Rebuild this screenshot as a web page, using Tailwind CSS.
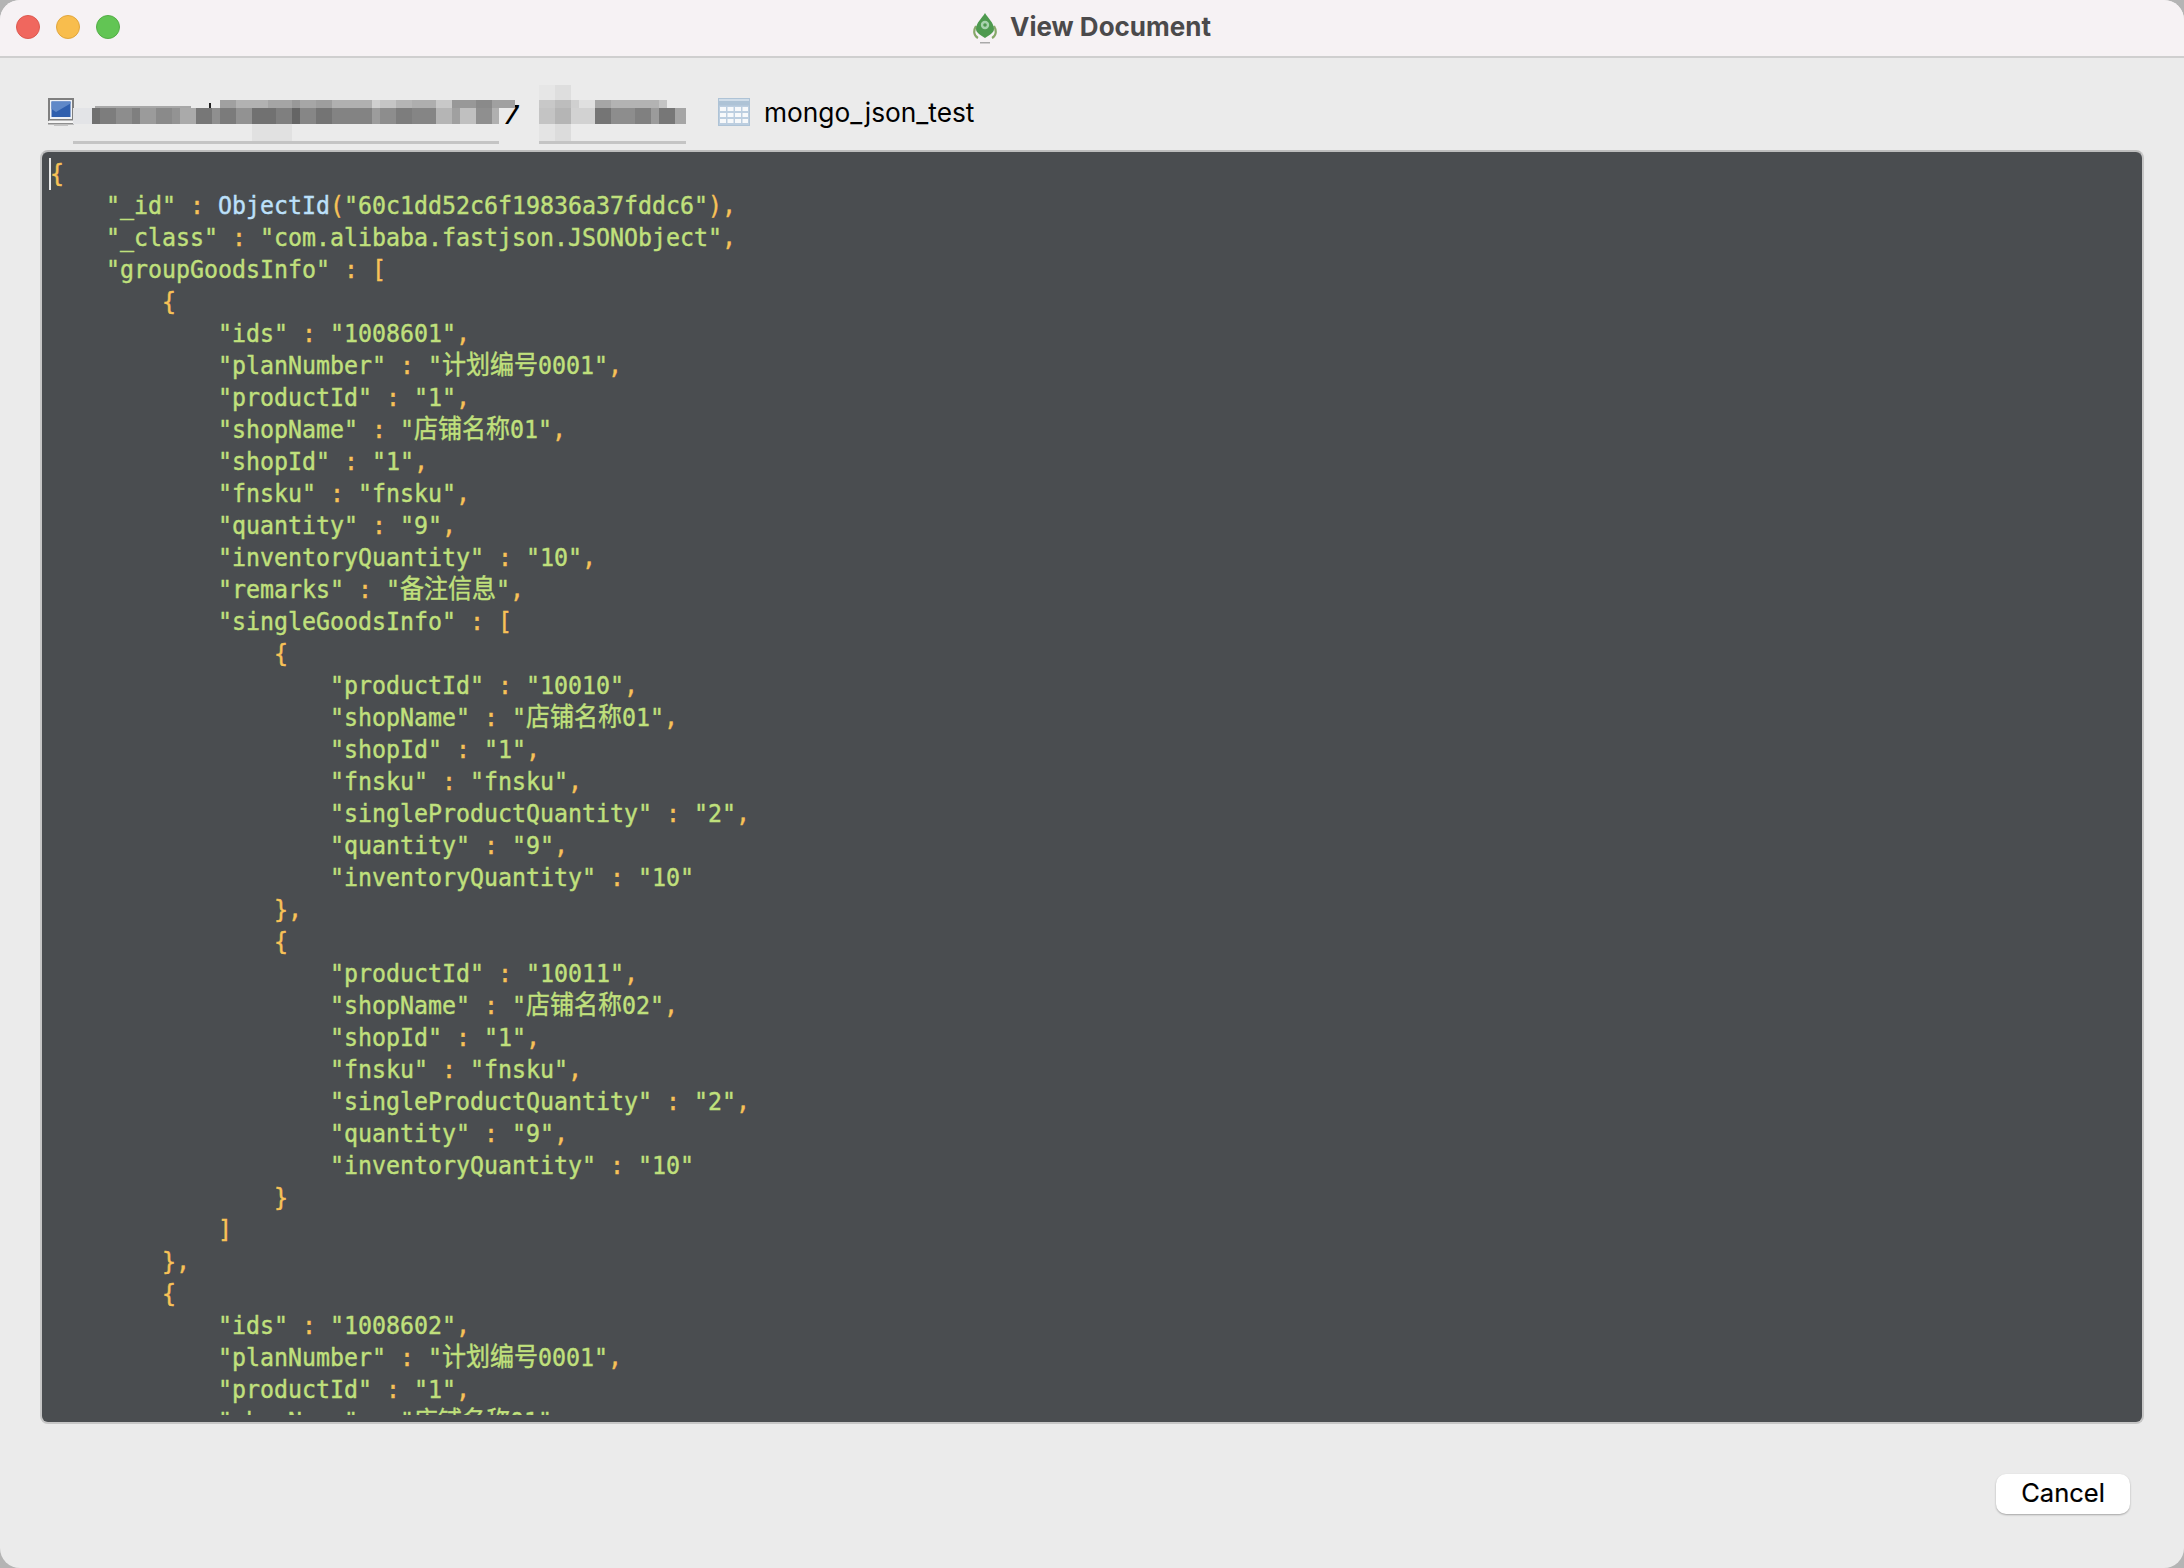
<!DOCTYPE html>
<html lang="en">
<head>
<meta charset="utf-8">
<title>View Document</title>
<script src="https://cdn.jsdelivr.net/npm/@tailwindcss/browser@4"></script>
</head>
<body class="bg-[#b4b4b4]">
<div class="w-[2184px] h-[1568px] overflow-hidden rounded-[20px] bg-[#ebebeb] flex flex-col font-['Inter',sans-serif]">

  <!-- title bar -->
  <header class="h-[58px] shrink-0 bg-[#f6f2f4] border-b-2 border-[#cfcfcf] grid grid-cols-[1fr_auto_1fr] items-center">
    <div class="flex gap-[16px] pl-[16px] pb-[2px]">
      <span class="w-[24px] h-[24px] rounded-full bg-[#f0675e] border border-[#dc5a50]"></span>
      <span class="w-[24px] h-[24px] rounded-full bg-[#f8bd4d] border border-[#e0a63d]"></span>
      <span class="w-[24px] h-[24px] rounded-full bg-[#62c554] border border-[#54ad47]"></span>
    </div>
    <div class="flex items-center gap-[13px] pb-[2px]">
      <svg width="24" height="31" viewBox="0 0 24 31" class="mt-[3px]">
        <path d="M3 13 C0 18 1 23 5 25" fill="none" stroke="#86a868" stroke-width="2.2"/>
        <path d="M21 13 C24 18 23 23 19 25" fill="none" stroke="#86a868" stroke-width="2.2"/>
        <path d="M12 0 C9 5 3 10 3 16 C3 20 8 22 12 25 C16 22 21 20 21 16 C21 10 15 5 12 0 Z" fill="#4e9a4f"/>
        <circle cx="12" cy="12" r="4.2" fill="#a8d3ae"/>
        <circle cx="12" cy="12" r="1.8" fill="#4e9a4f"/>
        <rect x="7" y="29" width="10" height="1.5" fill="#a9a9a9"/>
      </svg>
      <h1 class="text-[26px] leading-[32px] -mt-[1px] font-bold text-[#4b4a4b]">View Document</h1>
    </div>
    <div></div>
  </header>

  <!-- breadcrumb -->
  <nav class="h-[59px] mt-[27px] shrink-0 flex items-start">
    <svg width="26" height="28" viewBox="0 0 26 28" class="ml-[48px] mt-[13px] shrink-0">
      <rect x="1" y="1" width="24" height="21" fill="#eef1f6" stroke="#7f7f7f" stroke-width="2"/>
      <rect x="3.5" y="3.5" width="19" height="15.5" fill="#2f5fae"/>
      <path d="M8 14 L22.5 5.5 L22.5 3.5 L3.5 3.5 L3.5 11 Z" fill="#5f88c8"/>
      <rect x="1" y="22.5" width="24" height="2.5" fill="#f5f5f5"/>
      <rect x="0" y="25" width="26" height="1.5" fill="#8f8f8f"/>
      <rect x="6" y="26.5" width="14" height="1.5" fill="#c4c4c4"/>
    </svg>

    <div class="relative w-[466px] h-[59px] -ml-[1px] shrink-0">
      <span class="absolute left-0 top-[23px] w-[19px] h-[16px] bg-[#e3e4e7]"></span>
      <span class="absolute left-[179px] top-[39px] w-[40px] h-[17px] bg-[#e1e1e1]"></span>
      <span class="absolute left-0 top-[56px] w-[426px] h-[3px] bg-[#c4c4c4]"></span>
      <span class="absolute left-[136px] top-[18px] w-[2px] h-[5px] bg-[#222222]"></span>
      <span class="absolute left-[22px] top-[21px] w-[96px] h-[2px] bg-[#a8a8a8]"></span>
      <span class="absolute left-[431px] top-[16px] text-[25px] leading-[28px] font-medium italic text-black">7</span>
      <div class="absolute left-[147px] top-[15px] h-[8px] flex">
        <span class="w-[16px] bg-[#a0a0a0]"></span><span class="w-[32px] bg-[#b2b2b2]"></span><span class="w-[24px] bg-[#a5a5a5]"></span><span class="w-[8px] bg-[#999999]"></span><span class="w-[16px] bg-[#a6a6a6]"></span><span class="w-[16px] bg-[#9e9e9e]"></span><span class="w-[40px] bg-[#b0b0b0]"></span><span class="w-[8px] bg-[#d0d0d0]"></span><span class="w-[16px] bg-[#c5c5c5]"></span><span class="w-[16px] bg-[#b5b5b5]"></span><span class="w-[24px] bg-[#aeaeae]"></span><span class="w-[16px] bg-[#c8c8c8]"></span><span class="w-[24px] bg-[#989898]"></span><span class="w-[16px] bg-[#8a8a8a]"></span><span class="w-[23px] bg-[#a0a0a0]"></span>
      </div>
      <div class="absolute left-[19px] top-[23px] h-[16px] flex">
        <span class="w-[8px] bg-[#707070]"></span><span class="w-[16px] bg-[#7d7d7d]"></span><span class="w-[16px] bg-[#8d8d8d]"></span><span class="w-[8px] bg-[#7f7f7f]"></span><span class="w-[16px] bg-[#9b9b9b]"></span><span class="w-[16px] bg-[#8a8a8a]"></span><span class="w-[8px] bg-[#939393]"></span><span class="w-[16px] bg-[#aaaaaa]"></span><span class="w-[16px] bg-[#777777]"></span><span class="w-[8px] bg-[#8f8f8f]"></span><span class="w-[16px] bg-[#7b7b7b]"></span><span class="w-[16px] bg-[#929292]"></span><span class="w-[24px] bg-[#717171]"></span><span class="w-[16px] bg-[#7f7f7f]"></span><span class="w-[8px] bg-[#656565]"></span><span class="w-[16px] bg-[#868686]"></span><span class="w-[16px] bg-[#747474]"></span><span class="w-[40px] bg-[#838383]"></span><span class="w-[8px] bg-[#9c9c9c]"></span><span class="w-[16px] bg-[#8d8d8d]"></span><span class="w-[16px] bg-[#7d7d7d]"></span><span class="w-[24px] bg-[#858585]"></span><span class="w-[16px] bg-[#b5b5b5]"></span><span class="w-[8px] bg-[#a0a0a0]"></span><span class="w-[16px] bg-[#c0c0c0]"></span><span class="w-[16px] bg-[#8f8f8f]"></span><span class="w-[7px] bg-[#b0b0b0]"></span>
      </div>
    </div>

    <div class="relative w-[147px] h-[59px] shrink-0">
      <span class="absolute left-0 top-[56px] w-[147px] h-[3px] bg-[#c4c4c4]"></span>
      <div class="absolute left-0 top-0 w-[16px] h-[56px] flex flex-col">
        <span class="h-[15px] bg-[#e6e6e6]"></span><span class="h-[8px] bg-[#c8c8c8]"></span><span class="h-[16px] bg-[#c4c4c4]"></span><span class="h-[17px] bg-[#e4e4e4]"></span>
      </div>
      <div class="absolute left-[16px] top-0 w-[16px] h-[56px] flex flex-col">
        <span class="h-[15px] bg-[#dedede]"></span><span class="h-[8px] bg-[#bdbdbd]"></span><span class="h-[16px] bg-[#b5b5b5]"></span><span class="h-[17px] bg-[#dcdcdc]"></span>
      </div>
      <span class="absolute left-[32px] top-[23px] w-[24px] h-[16px] bg-[#d2d2d2]"></span>
      <span class="absolute left-[32px] top-[15px] w-[8px] h-[8px] bg-[#d0d0d0]"></span>
      <span class="absolute left-[40px] top-[15px] w-[16px] h-[8px] bg-[#e0e0e0]"></span>
      <div class="absolute left-[56px] top-[15px] h-[8px] flex">
        <span class="w-[16px] bg-[#a6a6a6]"></span><span class="w-[48px] bg-[#b3b3b3]"></span><span class="w-[8px] bg-[#c4c4c4]"></span>
      </div>
      <div class="absolute left-[56px] top-[23px] h-[16px] flex">
        <span class="w-[16px] bg-[#757575]"></span><span class="w-[24px] bg-[#8d8d8d]"></span><span class="w-[16px] bg-[#808080]"></span><span class="w-[8px] bg-[#9b9b9b]"></span><span class="w-[16px] bg-[#777777]"></span><span class="w-[11px] bg-[#a5a5a5]"></span>
      </div>
    </div>

    <svg width="32" height="28" viewBox="0 0 32 28" class="ml-[32px] mt-[13px] shrink-0">
      <rect width="32" height="28" fill="#aec3d6"/>
      <rect x="1" y="1" width="30" height="2" fill="#d0dde9"/>
      <rect x="1" y="7.5" width="30" height="19.5" fill="#bccee0"/>
      <g fill="#f7f9fb">
        <rect x="2" y="9" width="6" height="4"/><rect x="9.5" y="9" width="6" height="4"/><rect x="17" y="9" width="6" height="4"/><rect x="24.5" y="9" width="5.5" height="4"/>
        <rect x="2" y="15" width="6" height="4"/><rect x="9.5" y="15" width="6" height="4"/><rect x="17" y="15" width="6" height="4"/><rect x="24.5" y="15" width="5.5" height="4"/>
        <rect x="2" y="21" width="6" height="4"/><rect x="9.5" y="21" width="6" height="4"/><rect x="17" y="21" width="6" height="4"/><rect x="24.5" y="21" width="5.5" height="4"/>
      </g>
    </svg>
    <span class="ml-[14px] mt-[12px] text-[26.3px] leading-[32px] text-black">mongo_json_test</span>
  </nav>

  <!-- editor -->
  <main class="relative mt-[6px] ml-[40px] w-[2104px] h-[1274px] shrink-0 rounded-[8px] bg-[#4a4d50] border-2 border-[#c6c6c6] border-t-[#bdbdbd] pb-[7px]">
    <span class="absolute left-[7px] top-[6px] w-[2px] h-[32px] bg-[#e8e8e8]"></span>
    <div class="h-full overflow-hidden pt-[5.5px] pl-[8px]">
      <pre class="origin-left scale-x-[0.93] text-[25px] leading-[32px] [-webkit-text-stroke:0.4px] font-['DejaVu_Sans_Mono','Noto_Sans_CJK_SC',monospace] text-[#c0e07c] [&_b]:font-normal [&_b]:text-[#f8c257] [&_i]:not-italic [&_i]:text-[#bce0fa] [&_em]:not-italic [&_em]:text-[25.8px] [&_em]:leading-[0px]"><b>{</b>
    "_id" <b>:</b> <i>ObjectId</i><b>(</b>"60c1dd52c6f19836a37fddc6"<b>),</b>
    "_class" <b>:</b> "com.alibaba.fastjson.JSONObject"<b>,</b>
    "groupGoodsInfo" <b>: [</b>
        <b>{</b>
            "ids" <b>:</b> "1008601"<b>,</b>
            "planNumber" <b>:</b> "<em>计划编号</em>0001"<b>,</b>
            "productId" <b>:</b> "1"<b>,</b>
            "shopName" <b>:</b> "<em>店铺名称</em>01"<b>,</b>
            "shopId" <b>:</b> "1"<b>,</b>
            "fnsku" <b>:</b> "fnsku"<b>,</b>
            "quantity" <b>:</b> "9"<b>,</b>
            "inventoryQuantity" <b>:</b> "10"<b>,</b>
            "remarks" <b>:</b> "<em>备注信息</em>"<b>,</b>
            "singleGoodsInfo" <b>: [</b>
                <b>{</b>
                    "productId" <b>:</b> "10010"<b>,</b>
                    "shopName" <b>:</b> "<em>店铺名称</em>01"<b>,</b>
                    "shopId" <b>:</b> "1"<b>,</b>
                    "fnsku" <b>:</b> "fnsku"<b>,</b>
                    "singleProductQuantity" <b>:</b> "2"<b>,</b>
                    "quantity" <b>:</b> "9"<b>,</b>
                    "inventoryQuantity" <b>:</b> "10"
                <b>},</b>
                <b>{</b>
                    "productId" <b>:</b> "10011"<b>,</b>
                    "shopName" <b>:</b> "<em>店铺名称</em>02"<b>,</b>
                    "shopId" <b>:</b> "1"<b>,</b>
                    "fnsku" <b>:</b> "fnsku"<b>,</b>
                    "singleProductQuantity" <b>:</b> "2"<b>,</b>
                    "quantity" <b>:</b> "9"<b>,</b>
                    "inventoryQuantity" <b>:</b> "10"
                <b>}</b>
            <b>]</b>
        <b>},</b>
        <b>{</b>
            "ids" <b>:</b> "1008602"<b>,</b>
            "planNumber" <b>:</b> "<em>计划编号</em>0001"<b>,</b>
            "productId" <b>:</b> "1"<b>,</b>
            "shopName" <b>:</b> "<em>店铺名称</em>01"<b>,</b></pre>
    </div>
  </main>

  <!-- footer -->
  <footer class="flex justify-end pr-[54px] pt-[50px]">
    <button class="w-[134px] h-[40px] rounded-[10px] bg-white shadow-[0_1px_2px_rgba(0,0,0,0.3)] text-[25.5px] leading-[30px] pb-[2px] [-webkit-text-stroke:0.2px] text-black">Cancel</button>
  </footer>
</div>
</body>
</html>
